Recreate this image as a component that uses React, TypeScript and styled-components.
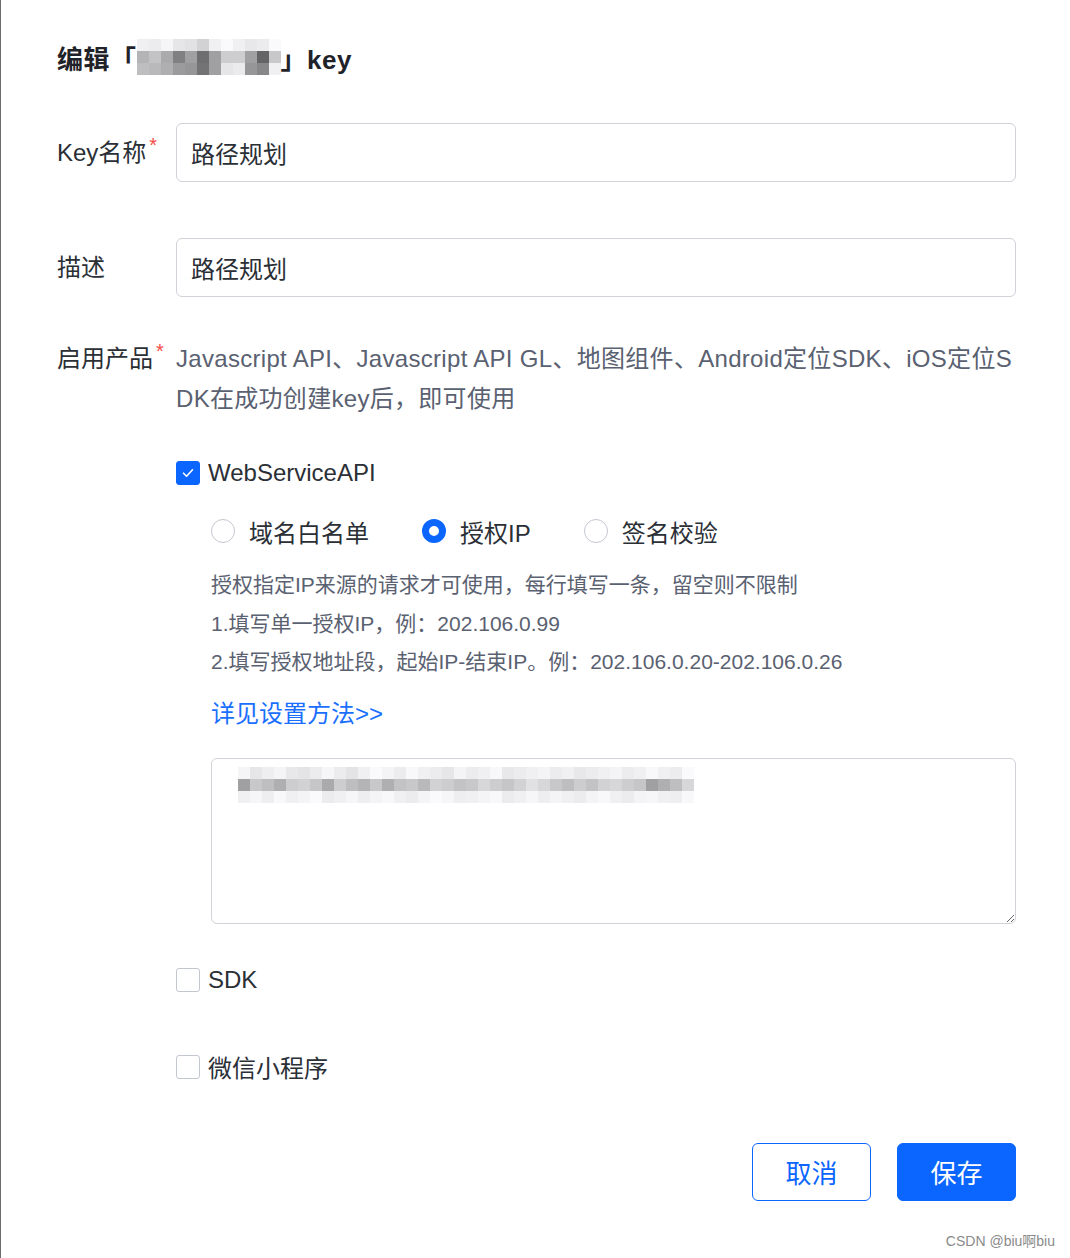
import React from 'react';
import styled, { createGlobalStyle } from 'styled-components';

const GlobalStyle = createGlobalStyle`
  html, body {
    margin: 0;
    padding: 0;
    background: #fff;
  }
  body {
    font-family: 'Liberation Sans', 'Noto Sans CJK SC', sans-serif;
    color: #2b2f36;
  }
  * { box-sizing: border-box; }
`;

const Page = styled.div`
  position: relative;
  width: 1070px;
  height: 1258px;
  border-left: 1px solid #6b6b6b;
  padding: 37px 54px 0 56px;
  overflow: hidden;
`;

const Title = styled.h1`
  display: flex;
  align-items: center;
  margin: 0;
  height: 40px;
  font-size: 26px;
  font-weight: 700;
  color: #1f2329;
  letter-spacing: 0.5px;
`;

const Mosaic = styled.div<{ $w: number }>`
  display: grid;
  grid-template-columns: repeat(${(p) => p.$w}, 12px);
  grid-auto-rows: 12px;
`;

const Tile = styled.span<{ $shade: number }>`
  background: ${(p) => `rgb(${p.$shade}, ${p.$shade}, ${p.$shade + 3})`};
`;

const Row = styled.div<{ $top: number; $align?: string }>`
  display: grid;
  grid-template-columns: 119px 1fr;
  align-items: ${(p) => p.$align || 'center'};
  margin-top: ${(p) => p.$top}px;
`;

const Label = styled.label`
  position: relative;
  font-size: 24px;
  color: #2b2f36;
  line-height: 40px;
  white-space: nowrap;
`;

const Star = styled.span`
  position: absolute;
  top: -8px;
  margin-left: 3px;
  color: #f54a45;
  font-size: 20px;
`;

const Input = styled.input`
  width: 100%;
  height: 59px;
  border: 1px solid #d0d3d8;
  border-radius: 6px;
  padding: 0 14px;
  font-family: inherit;
  font-size: 24px;
  color: #2b2f36;
  outline: none;
`;

const Description = styled.p`
  margin: 0;
  font-size: 24px;
  line-height: 40px;
  letter-spacing: 0.3px;
  color: #5a6171;
  word-break: break-all;
`;

const Products = styled.div`
  margin-left: 119px;
`;

const CheckRow = styled.label<{ $top: number }>`
  display: flex;
  align-items: center;
  gap: 8px;
  margin-top: ${(p) => p.$top}px;
  height: 30px;
  font-size: 24px;
  color: #2b2f36;
`;

const Box = styled.span<{ $checked?: boolean }>`
  display: inline-flex;
  align-items: center;
  justify-content: center;
  width: 24px;
  height: 24px;
  border-radius: 3px;
  border: 1px solid ${(p) => (p.$checked ? '#0a66ff' : '#c3c7cf')};
  background: ${(p) => (p.$checked ? '#0a66ff' : '#fff')};
`;

const Sub = styled.div`
  margin-left: 35px;
`;

const RadioGroup = styled.div`
  display: flex;
  align-items: center;
  margin-top: 28px;
  height: 30px;
`;

const RadioItem = styled.label`
  display: flex;
  align-items: center;
  gap: 14px;
  margin-right: 53px;
  font-size: 24px;
  color: #2b2f36;
`;

const Circle = styled.span<{ $checked?: boolean }>`
  width: 24px;
  height: 24px;
  border-radius: 50%;
  border: ${(p) => (p.$checked ? '7px solid #0a66ff' : '1px solid #c3c7cf')};
  background: #fff;
`;

const Help = styled.div`
  margin-top: 20px;
  font-size: 21px;
  line-height: 38.5px;
  color: #5a6171;
`;

const DocLink = styled.a`
  display: block;
  margin-top: 17px;
  font-size: 24px;
  line-height: 30px;
  color: #1a6fff;
  text-decoration: none;
`;

const AreaWrap = styled.div`
  position: relative;
  margin-top: 29px;
`;

const TextArea = styled.textarea`
  display: block;
  width: 100%;
  height: 166px;
  border: 1px solid #d0d3d8;
  border-radius: 6px;
  padding: 10px 14px;
  font-family: inherit;
  font-size: 20px;
  resize: vertical;
  outline: none;
`;

const AreaMosaic = styled.div`
  position: absolute;
  left: 27px;
  top: 9px;
`;

const Footer = styled.div`
  display: flex;
  justify-content: flex-end;
  gap: 26px;
  margin-top: 61px;
`;

const Button = styled.button<{ $primary?: boolean }>`
  width: 119px;
  height: 58px;
  border-radius: 6px;
  border: 1px solid #0a66ff;
  background: ${(p) => (p.$primary ? '#0a66ff' : '#fff')};
  color: ${(p) => (p.$primary ? '#fff' : '#0a66ff')};
  font-family: inherit;
  font-size: 26px;
  cursor: pointer;
`;

const Watermark = styled.div`
  position: absolute;
  right: 15px;
  bottom: 8px;
  font-size: 14px;
  color: #8a8a8a;
`;

const titleShades = [
  [240, 236, 245, 230, 226, 210, 240, 250, 240, 232, 236, 250],
  [180, 195, 170, 128, 160, 110, 160, 205, 205, 160, 100, 200],
  [190, 185, 175, 155, 150, 115, 160, 230, 235, 150, 135, 240],
];

const areaShades = [
  [245, 230, 238, 244, 232, 228, 236, 246, 236, 228, 240, 250, 244, 236, 248, 240, 236, 230, 244, 236, 240, 248, 232, 236, 240, 244, 236, 240, 232, 236, 240, 244, 236, 240, 248, 240, 236, 250],
  [160, 200, 190, 175, 205, 210, 198, 170, 205, 190, 180, 200, 175, 195, 200, 185, 210, 205, 195, 200, 215, 205, 198, 210, 225, 215, 200, 190, 205, 195, 210, 215, 205, 198, 160, 175, 190, 215],
  [240, 246, 238, 248, 240, 244, 250, 236, 240, 246, 238, 244, 248, 240, 236, 244, 250, 246, 238, 240, 244, 248, 236, 240, 246, 238, 244, 240, 236, 244, 248, 240, 236, 244, 246, 240, 238, 248],
];

function MosaicBlock({ rows }: { rows: number[][] }) {
  return (
    <Mosaic $w={rows[0].length}>
      {rows.flatMap((r, i) => r.map((s, j) => <Tile key={`${i}-${j}`} $shade={s} />))}
    </Mosaic>
  );
}

function Check() {
  return (
    <svg width="14" height="14" viewBox="0 0 14 14" fill="none">
      <path d="M2.5 7.2 L5.6 10.2 L11.5 3.8" stroke="#fff" strokeWidth="1.6" strokeLinecap="round" strokeLinejoin="round" />
    </svg>
  );
}

export default function App() {
  return (
    <Page>
      <GlobalStyle />
      {/* header */}
      <Title>
        编辑「
        <MosaicBlock rows={titleShades} />
        」key
      </Title>

      {/* name */}
      <Row $top={46}>
        <Label>
          Key名称<Star>*</Star>
        </Label>
        <Input defaultValue="路径规划" />
      </Row>

      {/* description */}
      <Row $top={56}>
        <Label>描述</Label>
        <Input defaultValue="路径规划" />
      </Row>

      {/* products */}
      <Row $top={42} $align="start">
        <Label>
          启用产品<Star>*</Star>
        </Label>
        <Description>
          Javascript API、Javascript API GL、地图组件、Android定位SDK、iOS定位SDK在成功创建key后，即可使用
        </Description>
      </Row>

      <Products>
        <CheckRow $top={39}>
          <Box $checked>
            <Check />
          </Box>
          WebServiceAPI
        </CheckRow>

        <Sub>
          <RadioGroup>
            <RadioItem>
              <Circle />
              域名白名单
            </RadioItem>
            <RadioItem>
              <Circle $checked />
              授权IP
            </RadioItem>
            <RadioItem>
              <Circle />
              签名校验
            </RadioItem>
          </RadioGroup>

          <Help>
            <div>授权指定IP来源的请求才可使用，每行填写一条，留空则不限制</div>
            <div>1.填写单一授权IP，例：202.106.0.99</div>
            <div>2.填写授权地址段，起始IP-结束IP。例：202.106.0.20-202.106.0.26</div>
          </Help>

          <DocLink href="#">详见设置方法&gt;&gt;</DocLink>

          <AreaWrap>
            <TextArea />
            <AreaMosaic>
              <MosaicBlock rows={areaShades} />
            </AreaMosaic>
          </AreaWrap>
        </Sub>

        <CheckRow $top={41}>
          <Box />
          SDK
        </CheckRow>
        <CheckRow $top={57}>
          <Box />
          微信小程序
        </CheckRow>
      </Products>

      <Footer>
        <Button>取消</Button>
        <Button $primary>保存</Button>
      </Footer>

      <Watermark>CSDN @biu啊biu</Watermark>
    </Page>
  );
}
